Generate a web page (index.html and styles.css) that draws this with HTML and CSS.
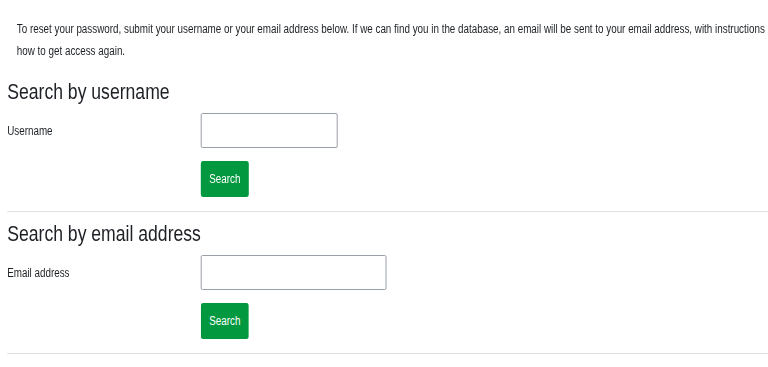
FILE: index.html
```html
<!DOCTYPE html>
<html lang="en">
<head>
    <meta charset="UTF-8">
    <meta name="viewport" content="width=device-width, initial-scale=1.0">
    <title>Forgotten password</title>
    <link rel="stylesheet" href="styles.css">
</head>
<body>
    <div class="frame">
        <div class="page">
            <p class="intro">To reset your password, submit your username or your email address below. If we can find you in the database, an email will be sent to your email address, with instructions how to get access again.</p>

            <form class="section">
                <h3>Search by username</h3>
                <div class="row">
                    <label for="username">Username</label>
                    <input type="text" id="username" class="field short">
                </div>
                <div class="row">
                    <span class="spacer"></span>
                    <button type="button" class="btn">Search</button>
                </div>
            </form>

            <form class="section">
                <h3>Search by email address</h3>
                <div class="row">
                    <label for="email">Email address</label>
                    <input type="text" id="email" class="field long">
                </div>
                <div class="row">
                    <span class="spacer"></span>
                    <button type="button" class="btn">Search</button>
                </div>
            </form>
        </div>
    </div>
</body>
</html>
```

FILE: styles.css
```css
html {
    overflow: hidden;
}
body {
    margin: 0;
    background: #ffffff;
    color: #1d2125;
    font-family: 'Liberation Sans', Arial, sans-serif;
}
.frame {
    width: 100%;
    overflow: hidden;
}
/* the page is drawn narrow, like a squeezed window */
.page {
    width: 960px;
    box-sizing: border-box;
    padding: 18px 0 0 9px;
    transform: scaleX(0.8);
    transform-origin: left top;
}
.intro {
    margin: 0 0 17px 12px;
    font-size: 12.3px;
    line-height: 22px;
}
.section {
    border-bottom: 1px solid #dee2e6;
    padding-bottom: 14px;
}
h3 {
    margin: 9px 0 8px;
    font-size: 22px;
    font-weight: normal;
    line-height: 26px;
}
.row {
    display: flex;
    align-items: center;
    margin-bottom: 13px;
}
.row:last-child {
    margin-bottom: 0;
}
label, .spacer {
    width: 242px;
    font-size: 12.3px;
}
.field {
    height: 35px;
    box-sizing: border-box;
    border: 1px solid #8f959e;
    border-radius: 2px;
    padding: 4px 8px;
}
.short {
    width: 171px;
}
.long {
    width: 232px;
}
.btn {
    width: 60px;
    height: 36px;
    border: none;
    border-radius: 3px;
    background: #02983f;
    color: #ffffff;
    font-family: inherit;
    font-size: 12.3px;
    padding: 0;
}
```
